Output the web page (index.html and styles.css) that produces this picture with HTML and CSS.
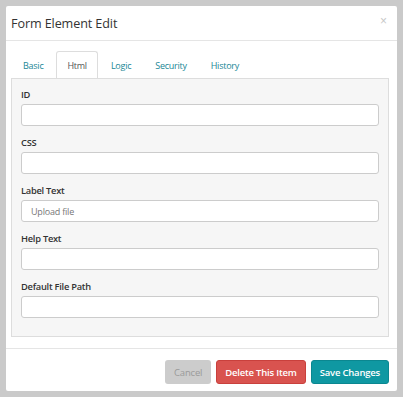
FILE: index.html
```html
<!DOCTYPE html>
<html lang="en">
<head>
  <meta charset="UTF-8">
  <title>Form Element Edit</title>
  <link rel="stylesheet" href="styles.css">
</head>
<body>
  <div class="modal">
    <div class="modal-header">
      <h4 class="modal-title">Form Element Edit</h4>
      <button class="close">&times;</button>
    </div>

    <div class="modal-body">
      <ul class="nav-tabs">
        <li><a href="#">Basic</a></li>
        <li class="active"><a href="#">Html</a></li>
        <li><a href="#">Logic</a></li>
        <li><a href="#">Security</a></li>
        <li><a href="#">History</a></li>
      </ul>

      <!-- Html tab -->
      <div class="tab-pane">
        <div class="form-group">
          <label for="elId">ID</label>
          <input type="text" id="elId">
        </div>
        <div class="form-group">
          <label for="elCss">CSS</label>
          <input type="text" id="elCss">
        </div>
        <div class="form-group">
          <label for="elLabel">Label Text</label>
          <input type="text" id="elLabel" value="Upload file">
        </div>
        <div class="form-group">
          <label for="elHelp">Help Text</label>
          <input type="text" id="elHelp">
        </div>
        <div class="form-group">
          <label for="elPath">Default File Path</label>
          <input type="text" id="elPath">
        </div>
      </div>
    </div>

    <div class="modal-footer">
      <button class="btn btn-cancel">Cancel</button>
      <button class="btn btn-danger">Delete This Item</button>
      <button class="btn btn-primary">Save Changes</button>
    </div>
  </div>
</body>
</html>
```

FILE: styles.css
```css
/* General styling */
body {
  margin: 0;
  padding: 6px;
  background-color: #cacaca;
  font-family: "Open Sans", Arial, sans-serif;
  color: #333;
}
.modal {
  width: 391px;
  height: 385px;
  background: #fff;
  border-radius: 2px;
  box-sizing: border-box;
  display: flex;
  flex-direction: column;
}
.modal-header {
  height: 35px;
  box-sizing: border-box;
  padding: 0 6px 0 5px;
  border-bottom: 1px solid #e5e5e5;
  display: flex;
  align-items: center;
  justify-content: space-between;
}
.modal-title {
  margin: 0;
  font-size: 12.6px;
  font-weight: normal;
  letter-spacing: -0.1px;
  color: #333;
}
.close {
  background: none;
  border: none;
  padding: 0 4px;
  font-size: 12px;
  line-height: 1;
  color: #c8c8c8;
  cursor: pointer;
  margin-top: -4px;
}
.modal-body {
  padding: 10px 8px 11px 5px;
  border-bottom: 1px solid #e5e5e5;
}
.nav-tabs {
  list-style: none;
  margin: 0;
  padding: 0 0 0 1px;
  display: flex;
  gap: 2px;
}
.nav-tabs li a {
  display: block;
  height: 27px;
  box-sizing: border-box;
  padding: 0 10px;
  line-height: 27px;
  font-size: 9px;
  letter-spacing: -0.25px;
  color: #1a8796;
  text-decoration: none;
  border: 1px solid transparent;
  border-bottom: none;
  border-radius: 3px 3px 0 0;
}
.nav-tabs li.active a {
  background: #fff;
  color: #555;
  border-color: #ddd;
}
.tab-pane {
  background: #f6f6f6;
  border: 1px solid #ddd;
  padding: 8px 9px 9px;
}
.form-group {
  margin-bottom: 9px;
}
.form-group label {
  display: block;
  font-size: 9.3px;
  font-weight: 600;
  letter-spacing: -0.25px;
  line-height: 15px;
  margin-bottom: 2px;
  color: #333;
}
.form-group input {
  display: block;
  width: 100%;
  height: 22px;
  box-sizing: border-box;
  padding: 0 9px;
  border: 1px solid #ccc;
  border-radius: 3px;
  background: #fff;
  font-family: inherit;
  font-size: 9px;
  letter-spacing: -0.2px;
  color: #777;
}
.modal-footer {
  padding: 11px 8px 0 0;
  display: flex;
  justify-content: flex-end;
  gap: 5px;
}
.btn {
  height: 24px;
  padding: 0 8px;
  border: 1px solid transparent;
  border-radius: 3px;
  font-family: inherit;
  font-size: 9.5px;
  font-weight: 600;
  letter-spacing: -0.2px;
  cursor: pointer;
}
.btn-cancel {
  background-color: #cccccc;
  color: #9a9a9a;
  font-weight: normal;
}
.btn-danger {
  background-color: #d9534f;
  border-color: #c9403c;
  color: #fff;
}
.btn-primary {
  background-color: #0f98a2;
  border-color: #0b8790;
  color: #fff;
}
```
